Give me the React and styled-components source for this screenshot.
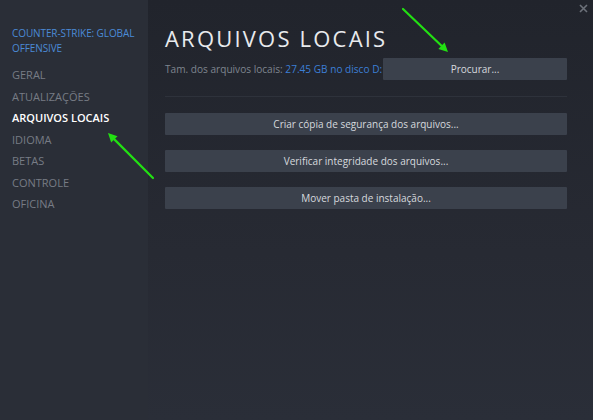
import React from "react";
import styled, { createGlobalStyle } from "styled-components";

const Global = createGlobalStyle`
  html, body { margin: 0; padding: 0; background: #23262e; }
  body { font-family: "Open Sans", "Noto Sans", sans-serif; }
  #root { width: 593px; height: 420px; }
`;

const Window = styled.div`
  position: relative;
  display: flex;
  width: 593px;
  height: 420px;
  overflow: hidden;
`;

const Sidebar = styled.nav`
  width: 148px;
  flex-shrink: 0;
  background: #2a2e37;
  padding: 26px 0 0 12px;
  box-sizing: border-box;
  display: flex;
  flex-direction: column;
`;

const GameTitle = styled.div`
  color: #4b8ad6;
  font-size: 10px;
  line-height: 15px;
  text-transform: uppercase;
  margin-bottom: 8px;
  letter-spacing: -0.1px;
`;

const MenuItem = styled.div`
  font-size: 11px;
  line-height: 21.5px;
  text-transform: uppercase;
  color: ${(p) => (p.$active ? "#ffffff" : "#777c85")};
  font-weight: ${(p) => (p.$active ? 600 : 400)};
`;

const Main = styled.main`
  flex: 1;
  min-width: 0;
  background: linear-gradient(180deg, #21242c 0%, #272a33 60%, #2a2e38 100%);
  padding: 23px 26px 0 17px;
  box-sizing: border-box;
  display: flex;
  flex-direction: column;
`;

const Title = styled.h1`
  margin: 0;
  font-size: 22px;
  line-height: 30px;
  font-weight: 400;
  letter-spacing: 2.2px;
  color: #e8eaed;
`;

const SizeRow = styled.div`
  display: flex;
  align-items: center;
  margin-top: 5px;
  height: 22px;
`;

const SizeText = styled.div`
  flex: 1;
  min-width: 0;
  font-size: 10.1px;
  color: #7f858e;
  white-space: nowrap;
`;

const Link = styled.span`
  color: #3c7fd6;
`;

const Button = styled.button`
  display: flex;
  align-items: center;
  justify-content: center;
  height: 22px;
  width: ${(p) => p.$width || "100%"};
  flex-shrink: 0;
  border: none;
  border-radius: 1px;
  background: #3b414c;
  color: #d6d9de;
  font-family: inherit;
  font-size: 10px;
  padding: 0;
`;

const Separator = styled.div`
  height: 1px;
  background: #2e323b;
  margin: 16px 0 16px;
`;

const ButtonList = styled.div`
  display: flex;
  flex-direction: column;
  gap: 15px;
`;

const Close = styled.div`
  position: absolute;
  top: 3px;
  right: 5px;
  width: 10px;
  height: 10px;
  display: flex;
  align-items: center;
  justify-content: center;
`;

const Overlay = styled.svg`
  position: absolute;
  left: 0;
  top: 0;
  pointer-events: none;
`;

function Arrow({ x1, y1, x2, y2 }) {
  const ang = Math.atan2(y2 - y1, x2 - x1);
  const len = 9;
  const w = 4.5;
  const bx = x2 - len * Math.cos(ang);
  const by = y2 - len * Math.sin(ang);
  const px = -Math.sin(ang) * w;
  const py = Math.cos(ang) * w;
  return (
    <g>
      <line x1={x1} y1={y1} x2={bx} y2={by} stroke="#22e012" strokeWidth="2.2" strokeLinecap="round" />
      <polygon points={`${x2},${y2} ${bx + px},${by + py} ${bx - px},${by - py}`} fill="#22e012" />
    </g>
  );
}

const menu = ["Geral", "Atualizações", "Arquivos locais", "Idioma", "Betas", "Controle", "Oficina"];

export default function App() {
  return (
    <>
      <Global />
      <Window>
        <Sidebar>
          <GameTitle>
            Counter-Strike: Global
            <br />
            Offensive
          </GameTitle>
          {menu.map((m) => (
            <MenuItem key={m} $active={m === "Arquivos locais"}>
              {m}
            </MenuItem>
          ))}
        </Sidebar>
        <Main>
          <Title>ARQUIVOS LOCAIS</Title>
          <SizeRow>
            <SizeText>
              Tam. dos arquivos locais: <Link>27.45 GB no disco D:</Link>
            </SizeText>
            <Button $width="184px">Procurar...</Button>
          </SizeRow>
          <Separator />
          <ButtonList>
            <Button>Criar cópia de segurança dos arquivos...</Button>
            <Button>Verificar integridade dos arquivos...</Button>
            <Button>Mover pasta de instalação...</Button>
          </ButtonList>
        </Main>
        <Close>
          <svg width="9" height="9" viewBox="0 0 9 9">
            <path d="M1 1 L8 8 M8 1 L1 8" stroke="#6c717a" strokeWidth="1.6" />
          </svg>
        </Close>
        <Overlay width="593" height="420">
          <Arrow x1={153} y1={178} x2={108} y2={133} />
          <Arrow x1={403} y1={9} x2={448} y2={52} />
        </Overlay>
      </Window>
    </>
  );
}
